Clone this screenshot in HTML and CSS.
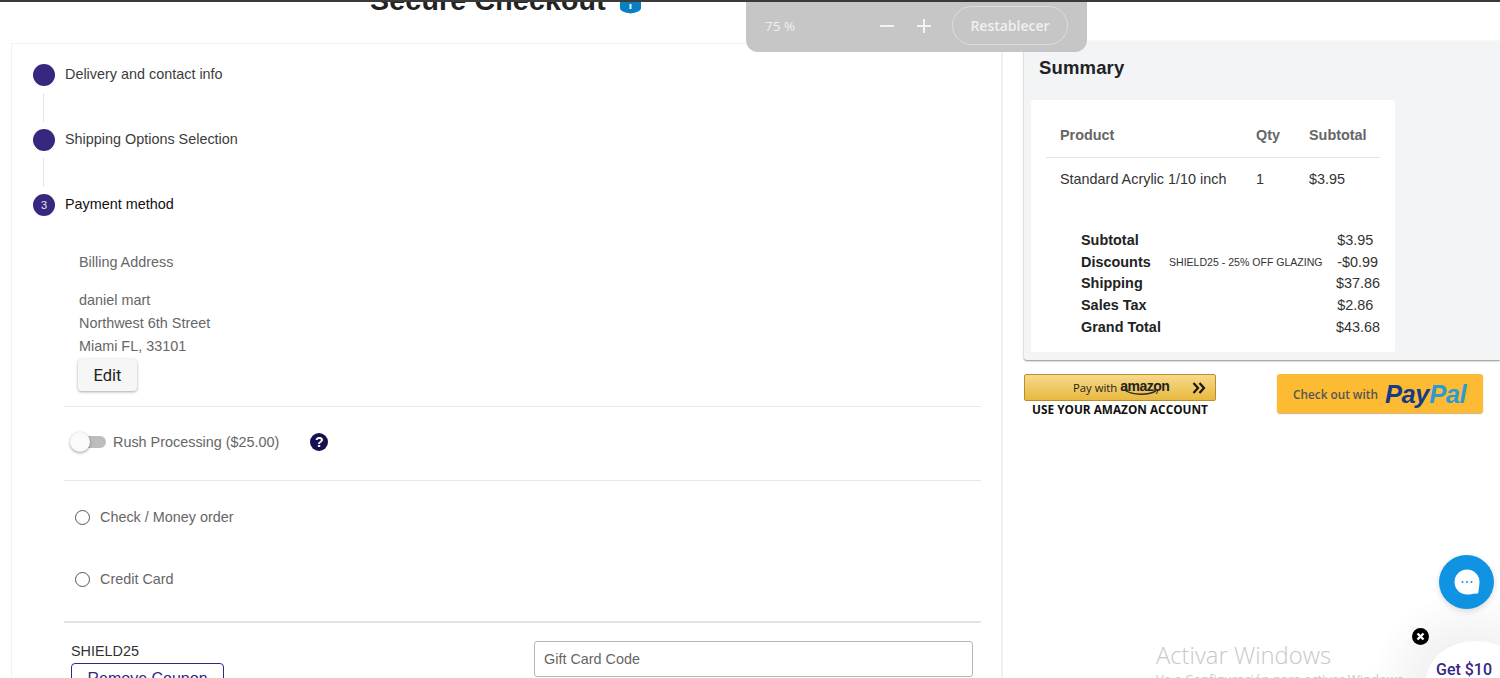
FILE: index.html
```html
<!DOCTYPE html>
<html lang="en">
<head>
<meta charset="utf-8">
<title>Secure Checkout</title>
<link rel="stylesheet" href="styles.css">
</head>
<body>
<div class="page">
  <header class="title-row">
    <h1 class="title">Secure Checkout</h1>
    <svg class="shield" width="22" height="14" viewBox="0 0 22 14"><path d="M0 0H21V8C21 11 17 12.500 10.500 13.500C4 12.500 0 11 0 8Z" fill="#0a80c4"/><path d="M9.500 4H11.500V9H9.500Z" fill="#e8f4fb"/></svg>
  </header>
  <div class="columns">
    <main class="checkout">
      <ol class="steps">
        <li class="step"><span class="dot"></span><span class="step-label">Delivery and contact info</span></li>
        <li class="connector"></li>
        <li class="step"><span class="dot"></span><span class="step-label">Shipping Options Selection</span></li>
        <li class="connector"></li>
        <li class="step"><span class="dot">3</span><span class="step-label current">Payment method</span></li>
      </ol>
      <section class="payment">
        <h2 class="billing-title">Billing Address</h2>
        <address class="address">daniel mart<br>Northwest 6th Street<br>Miami FL, 33101</address>
        <button class="edit-btn">Edit</button>
        <hr class="rule">
        <div class="rush">
          <span class="switch"><span class="knob"></span></span>
          <span class="rush-label">Rush Processing ($25.00)</span>
          <span class="help">?</span>
        </div>
        <hr class="rule tight">
        <label class="radio first"><span class="radio-ring"></span>Check / Money order</label>
        <label class="radio"><span class="radio-ring"></span>Credit Card</label>
        <hr class="rule strong">
        <div class="codes">
          <div class="coupon">
            <div class="coupon-code">SHIELD25</div>
            <button class="remove-btn">Remove Coupon</button>
          </div>
          <div class="gift-input">Gift Card Code</div>
        </div>
      </section>
    </main>
    <aside class="side">
      <section class="summary">
        <h2 class="summary-title">Summary</h2>
        <div class="summary-card">
          <div class="item-row item-head"><span class="col-product">Product</span><span class="col-qty">Qty</span><span>Subtotal</span></div>
          <div class="item-row item-body"><span class="col-product">Standard Acrylic 1/10 inch</span><span class="col-qty">1</span><span>$3.95</span></div>
          <div class="totals">
            <div class="total-row"><b>Subtotal</b><span></span><span>$3.95</span></div>
            <div class="total-row"><b>Discounts</b><span class="promo">SHIELD25 - 25% OFF GLAZING</span><span>-$0.99</span></div>
            <div class="total-row"><b>Shipping</b><span></span><span>$37.86</span></div>
            <div class="total-row"><b>Sales Tax</b><span></span><span>$2.86</span></div>
            <div class="total-row"><b>Grand Total</b><span></span><span>$43.68</span></div>
          </div>
        </div>
      </section>
      <div class="pay-buttons">
        <div class="amazon">
          <div class="amazon-btn">
            <span class="amazon-pay">Pay with</span>
            <span class="amazon-logo">amazon<svg class="smile" width="38" height="7" viewBox="0 0 38 7"><path d="M1 1C11 6.500 24 6.500 33 2" fill="none" stroke="#2b2b2b" stroke-width="1.400"/><path d="M30 1L35 1L33.500 5" fill="none" stroke="#2b2b2b" stroke-width="1"/></svg></span>
            <svg class="chevrons" width="14" height="12" viewBox="0 0 14 12"><path d="M1.500 1L6 6L1.500 11M7.500 1L12 6L7.500 11" fill="none" stroke="#161616" stroke-width="2.200"/></svg>
          </div>
          <div class="amazon-note">USE YOUR AMAZON ACCOUNT</div>
        </div>
        <div class="paypal-btn"><span class="paypal-text">Check out with</span><span class="paypal-logo"><span class="pay">Pay</span><span class="pal">Pal</span></span></div>
      </div>
    </aside>
  </div>

  <div class="zoom-bar">
    <span class="zoom-value">75 %</span>
    <span class="zoom-minus"></span>
    <span class="zoom-plus"></span>
    <span class="zoom-reset">Restablecer</span>
  </div>

  <button class="chat">
    <svg width="28" height="28" viewBox="0 0 28 28"><path d="M14 1.500C21 1.500 26.500 7 26.500 14C26.500 17 25.800 20 25.500 23.500C25.400 25.500 24 26 22 25.500C19.500 26 17 26.500 14 26.500C7 26.500 1.500 21 1.500 14C1.500 7 7 1.500 14 1.500Z" fill="#fff"/><circle cx="9.500" cy="14" r="1" fill="#0f93e2"/><circle cx="14" cy="14" r="1" fill="#0f93e2"/><circle cx="18.500" cy="14" r="1" fill="#0f93e2"/></svg>
  </button>
  <div class="windows-mark">
    <div class="windows-title">Activar Windows</div>
    <div class="windows-sub">Ve a Configuración para activar Windows.</div>
  </div>
  <div class="reward-glow"></div>
  <div class="reward">Get $10</div>
  <svg class="reward-close" width="17" height="17" viewBox="0 0 17 17"><circle cx="8.500" cy="8.500" r="8.500" fill="#000"/><path d="M5.500 5.500L11.500 11.500M11.500 5.500L5.500 11.500" stroke="#fff" stroke-width="2.400"/></svg>
</div>
</body>
</html>
```
FILE: styles.css
```css
* { box-sizing: border-box; }
html, body { margin: 0; padding: 0; }
body { font-family: "Liberation Sans", Arial, sans-serif; color: #333; background: #fff; }
.page { position: relative; width: 1500px; height: 678px; overflow: hidden; border-top: 2px solid #3a3a3a; }

.title-row { width: 1012px; height: 41px; display: flex; justify-content: center; align-items: flex-start; }
.title { margin: -16px 0 0 0; font-size: 28.500px; line-height: 28px; font-weight: 700; color: #222; letter-spacing: 0.200px; }
.shield { margin: -2px 0 0 14px; }

.columns { display: flex; align-items: flex-start; padding-left: 11px; }
.checkout { width: 992px; height: 700px; background: #fff; border: 1px solid #f3f3f3; border-right: 2px solid #f0f0f0; padding: 20px 0 0 21px; }

.steps { list-style: none; margin: 0; padding: 0; }
.step { display: flex; align-items: center; height: 22px; }
.dot { width: 22px; height: 22px; border-radius: 50%; background: #39267f; color: #e8e4f5; font-size: 11px; display: flex; align-items: center; justify-content: center; flex: none; }
.step-label { margin: -2px 0 0 10px; font-size: 14.400px; color: #3c3c3c; }
.step-label.current { color: #111; }
.connector { width: 1px; height: 43px; margin-left: 10px; padding: 7px 0; background: #e3e3e3; background-clip: content-box; }

.payment { width: 917px; padding-top: 36px; margin-left: 31px; }
.billing-title { margin: 0 0 0 15px; font-size: 14.400px; line-height: 20px; font-weight: 400; color: #666; }
.address { margin: 17px 0 0 15px; font-style: normal; font-size: 14.400px; line-height: 23px; color: #666; }
.edit-btn { display: block; margin: 1px 0 0 14px; width: 59px; height: 32px; border: 0; border-radius: 4px; background: #f6f6f6; box-shadow: 0 1px 3px rgba(0,0,0,.35); font-family: Roboto, sans-serif; font-size: 16.500px; color: #222; }
.rule { margin: 15px 0 0 0; border: 0; border-top: 1px solid #e8e8e8; }
.rule.tight { margin-top: 3px; }
.rule.strong { margin-top: 32px; border-top: 2px solid #e4e4e4; }

.rush { display: flex; align-items: center; height: 70px; }
.switch { position: relative; width: 32px; height: 12px; margin-left: 10px; border-radius: 6px; background: #bdbdbd; }
.knob { position: absolute; left: -4px; top: -4px; width: 20px; height: 20px; border-radius: 50%; background: #fafafa; box-shadow: 0 1px 3px rgba(0,0,0,.4); }
.rush-label { margin: -1px 0 0 7px; font-size: 14.400px; color: #666; }
.help { margin-left: 31px; width: 18px; height: 18px; border-radius: 50%; background: #17104e; color: #fff; font-size: 14px; font-weight: 700; display: flex; align-items: center; justify-content: center; }

.radio { display: flex; align-items: center; height: 20px; margin-top: 42px; padding-left: 11px; font-size: 14.400px; color: #666; }
.radio.first { margin-top: 26px; }
.radio-ring { width: 15px; height: 15px; border: 1.500px solid #555; border-radius: 50%; margin-right: 10px; }

.codes { display: flex; align-items: flex-start; padding-top: 18px; }
.coupon { width: 470px; padding-left: 7px; }
.coupon-code { font-size: 14.400px; line-height: 20px; color: #333; }
.remove-btn { display: block; margin-top: 2px; width: 153px; height: 32px; background: #fff; border: 1px solid #39267f; border-radius: 4px; font-family: "Liberation Sans", sans-serif; font-size: 16px; color: #39267f; padding: 0; }
.gift-input { width: 439px; height: 36px; border: 1px solid #b5b5b5; border-radius: 3px; padding: 0 9px; font-size: 14.400px; line-height: 34px; color: #666; }

.side { width: 476px; margin-left: 21px; margin-top: -2px; }
.summary { height: 319px; background: #f2f4f6; border-radius: 0 0 0 3px; box-shadow: 0 1px 2px rgba(0,0,0,.45); padding: 16px 0 0 7px; }
.summary-title { margin: 0 0 0 8px; font-size: 18.500px; line-height: 22px; font-weight: 700; color: #222; letter-spacing: 0.150px; }
.summary-card { margin-top: 21px; width: 364px; height: 252px; background: #fff; border-radius: 3px; padding: 15px 15px 0; }
.item-row { display: flex; padding-left: 14px; font-size: 14.400px; }
.item-head { height: 43px; align-items: center; padding-bottom: 2px; font-weight: 700; color: #666; border-bottom: 1px solid #e4e4e4; }
.item-body { height: 42px; align-items: center; color: #333; }
.col-product { width: 196px; }
.col-qty { width: 53px; }
.totals { margin: 29px 0 0 35px; font-size: 14.400px; color: #333; }
.total-row { display: flex; align-items: center; height: 21.700px; }
.total-row b { width: 88px; color: #222; letter-spacing: 0.020px; }
.total-row > span:nth-child(2) { width: 168.300px; flex: none; }
.promo { font-size: 10.550px; color: #333; }

.pay-buttons { display: flex; align-items: flex-start; margin-top: 14px; }
.amazon { width: 253px; }
.amazon-btn { position: relative; display: flex; align-items: center; width: 192px; height: 27px; border: 1px solid #b88f2c; border-radius: 2px; background: linear-gradient(#f6d98b, #e9b93f); padding-left: 48px; }
.amazon-pay { font-family: "Open Sans", sans-serif; font-size: 11.300px; color: #222; }
.amazon-logo { position: relative; margin-left: 3px; margin-top: -3px; font-size: 14px; font-weight: 700; color: #222; letter-spacing: -0.500px; }
.smile { position: absolute; left: 3px; top: 11px; }
.chevrons { position: absolute; left: 167px; top: 7px; }
.amazon-note { width: 192px; text-align: center; margin-top: 0; font-family: "Open Sans", sans-serif; font-size: 11.800px; line-height: 16px; font-weight: 700; color: #111; white-space: nowrap; }
.paypal-btn { display: flex; align-items: center; width: 206px; height: 39px; border-radius: 3px; background: #fdbb33; box-shadow: 0 1px 1px rgba(160,100,0,.5); padding-left: 16px; }
.paypal-text { font-family: "Open Sans", sans-serif; font-size: 11.800px; font-weight: 600; color: #555; }
.paypal-logo { margin-left: 7px; font-size: 25.500px; line-height: 26px; font-weight: 700; font-style: italic; letter-spacing: -0.400px; }
.pay { color: #163a85; }
.pal { color: #2a9bd6; }

.zoom-bar { position: absolute; left: 746px; top: 0; width: 341px; height: 50px; background: #c6c6c6; border-radius: 0 0 12px 12px; color: #f0f0f0; font-family: "Open Sans", sans-serif; }
.zoom-value { position: absolute; left: 19px; top: 15px; font-size: 13.500px; }
.zoom-minus { position: absolute; left: 134px; top: 22.500px; width: 14px; height: 2px; background: #f3f3f3; }
.zoom-plus { position: absolute; left: 171px; top: 22.500px; width: 14px; height: 2px; background: #f3f3f3; }
.zoom-plus::after { content: ""; position: absolute; left: 6px; top: -6px; width: 2px; height: 14px; background: #f3f3f3; }
.zoom-reset { position: absolute; left: 206px; top: 4px; width: 116px; height: 39px; border: 1px solid #dcdcea; border-radius: 20px; text-align: center; line-height: 37px; font-size: 14px; font-weight: 600; }

.chat { position: absolute; left: 1439px; top: 553px; width: 55px; height: 54px; border: 0; padding: 0; border-radius: 50%; background: #0f93e2; box-shadow: 0 2px 6px rgba(0,0,0,.15); display: flex; align-items: center; justify-content: center; }
.windows-mark { position: absolute; left: 1156px; top: 638px; color: #c8c8c8; font-family: "Open Sans", sans-serif; white-space: nowrap; }
.windows-title { font-size: 23.800px; line-height: 30px; font-weight: 300; }
.windows-sub { font-size: 13px; line-height: 18px; }
.reward-glow { position: absolute; left: 1370px; top: 590px; width: 200px; height: 180px; border-radius: 50%; background: radial-gradient(closest-side, rgba(0,0,0,.09), rgba(0,0,0,0)); }
.reward { position: absolute; left: 1426px; top: 639px; width: 100px; height: 80px; border-radius: 50%; background: #fff; padding: 19px 0 0 10px; font-family: Roboto, sans-serif; font-size: 16px; font-weight: 500; color: #39267f; white-space: nowrap; }
.reward-close { position: absolute; left: 1412px; top: 626px; }
```
